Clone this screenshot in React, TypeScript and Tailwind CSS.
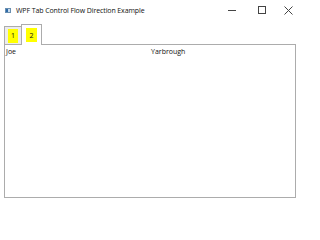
import React from "react";

export default function App() {
  return (
    <div className="w-[300px] h-[200px] bg-white relative overflow-hidden" style={{ fontFamily: '"Open Sans", "Liberation Sans", Arial, sans-serif' }}>
      {/* Title bar */}
      <div className="h-[20px] flex items-center">
        <div className="ml-[5px] w-[6px] h-[5px] border border-[#6a8fb0] bg-[#c9dced] relative">
          <div className="absolute left-0 top-0 w-[2px] h-full bg-[#2d6aa8]" />
        </div>
        <span className="ml-[5px] text-[7px] leading-none text-[#111] tracking-[-0.1px]">WPF Tab Control Flow Direction Example</span>
        <div className="flex-1" />
        <div className="w-[28px] flex justify-center items-center">
          <div className="w-[8px] h-[1px] bg-[#444]" />
        </div>
        <div className="w-[31px] flex justify-center items-center">
          <div className="w-[8px] h-[8px] border border-[#444]" />
        </div>
        <div className="w-[23px] flex justify-center items-center">
          <svg width="9" height="9" viewBox="0 0 9 9">
            <path d="M0.5 0.5 L8.5 8.5 M8.5 0.5 L0.5 8.5" stroke="#444" strokeWidth="1" />
          </svg>
        </div>
      </div>
      {/* Tab area */}
      <div className="px-[4px]">
        <div className="h-[24px] flex items-end relative z-10">
          <div className="h-[18px] w-[18px] border border-b-0 border-[#acacac] bg-[#ececec] flex items-center justify-center">
            <span className="bg-[#ffff00] text-[7px] leading-[9px] text-[#111] px-[3px] py-[2.5px]">1</span>
          </div>
          <div className="h-[21px] w-[21px] -ml-[1px] border border-b-0 border-[#acacac] bg-white flex items-center justify-center -mb-[1px]">
            <span className="bg-[#ffff00] text-[7px] leading-[9px] text-[#111] px-[3px] py-[2.5px]">2</span>
          </div>
        </div>
        <div className="h-[154px] border border-[#acacac] bg-white relative">
          <div className="flex text-[7px] leading-none text-[#111] pt-[3px] pl-[1px]">
            <span className="w-[145px]">Joe</span>
            <span>Yarbrough</span>
          </div>
        </div>
      </div>
    </div>
  );
}
